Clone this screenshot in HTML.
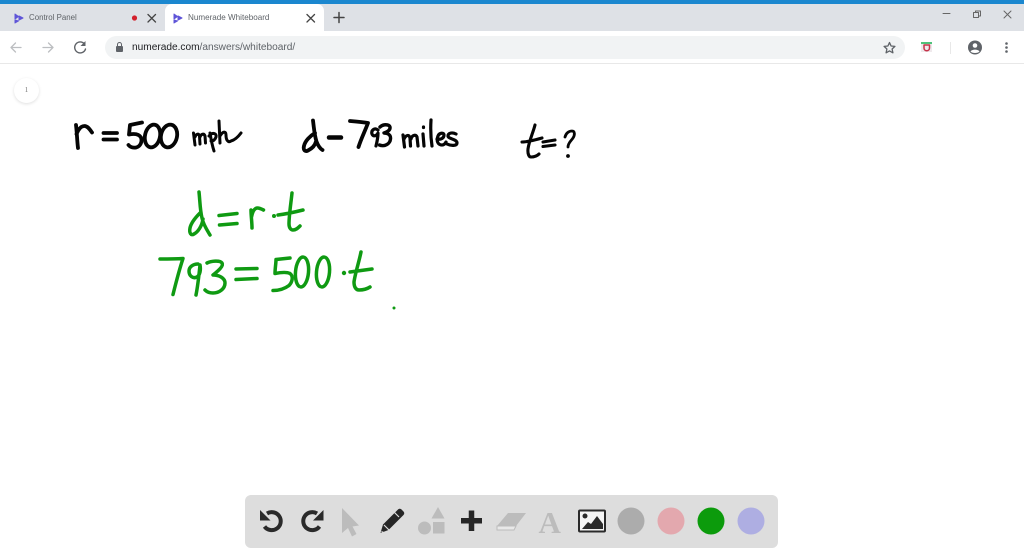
<!DOCTYPE html>
<html><head><meta charset="utf-8"><style>
html,body{margin:0;padding:0;width:1024px;height:554px;overflow:hidden;background:#fff;font-family:"Liberation Sans",sans-serif}
.a{position:absolute}
svg{position:absolute;left:0;top:0;filter:blur(.35px)}
.t{filter:blur(.25px)}
</style></head><body>
<div class="a" style="left:0;top:0;width:1024px;height:31px;background:#dee1e6"></div>
<div class="a" style="left:0;top:0;width:1024px;height:4px;background:#1b87cf"></div>
<div class="a" style="left:165px;top:4px;width:159px;height:28px;background:#fff;border-radius:7px 7px 0 0"></div>
<div class="a" style="left:0;top:63px;width:1024px;height:1px;background:#e8e8e8"></div>
<div class="a" style="left:105px;top:36px;width:800px;height:23px;background:#f1f3f4;border-radius:12px"></div>
<div class="a t" style="left:29px;top:12px;font-size:7.900px;color:#5f6368;line-height:12px">Control Panel</div>
<div class="a t" style="left:188px;top:12px;font-size:8.100px;color:#5f6368;line-height:12px">Numerade Whiteboard</div>
<div class="a t" style="left:132px;top:41px;font-size:10.150px;line-height:13px;color:#202124;white-space:nowrap">numerade.com<span style="color:#5f6368">/answers/whiteboard/</span></div>
<div class="a" style="left:14px;top:78px;width:25px;height:25px;border-radius:50%;background:#fff;box-shadow:0 1px 3px rgba(0,0,0,.13);text-align:center;font:7px/25px 'Liberation Serif',serif;color:#777">1</div>
<svg width="1024" height="554" viewBox="0 0 1024 554" fill="none" stroke-linecap="round" stroke-linejoin="round">
<!-- tab favicons -->
<g fill="#5f55d8" stroke="#5f55d8" stroke-width="1"><path d="M15 14l3.500 2.500-3.500 2.500z"/><path d="M19 16l4 2-4 2z"/><path d="M15 20l3.500 1-3.500 2z"/>
<path d="M174 14l3.500 2.500-3.500 2.500z"/><path d="M178 16l4 2-4 2z"/><path d="M174 20l3.500 1-3.500 2z"/></g>
<circle cx="134.500" cy="18" r="2.600" fill="#d3202c"/>
<g stroke="#444" stroke-width="1.300"><path d="M148 14.500l7.500 7.500M155.500 14.500l-7.500 7.500M307 14.500l7.500 7.500M314.500 14.500l-7.500 7.500"/><path d="M334 17.500h10M339 12.500v10" stroke-width="1.500"/></g>
<!-- nav -->
<g stroke="#bcbec1" stroke-width="1.300"><path d="M21 47.500H11M15.500 43l-4.500 4.500 4.500 4.500M43 47.500h10M48.500 43l4.500 4.500-4.500 4.500"/></g>
<path d="M84.500 44a5.500 5.500 0 1 0 1 5" stroke="#5f6368" stroke-width="1.400"/><path d="M85.500 41v5h-5z" fill="#5f6368"/>
<rect x="116" y="46" width="7" height="6" rx="1" fill="#5f6368"/><path d="M117.500 46v-1.500a2 2 0 0 1 4 0V46" stroke="#5f6368" stroke-width="1"/>
<!-- star, ext, profile, menu -->
<path d="M889.500 42.500l1.600 3.500 3.800.4-2.800 2.600.8 3.800-3.400-1.900-3.400 1.900.8-3.800-2.800-2.600 3.800-.4z" stroke="#5f6368" stroke-width="1.300"/>
<rect x="921" y="42" width="11" height="10" fill="#efe9ec"/><rect x="921" y="42" width="11" height="2" fill="#4fc27a"/>
<path d="M924 45h5.500v3a2.750 2.750 0 0 1-5.500 0z" stroke="#c5334a" stroke-width="1.500"/>
<rect x="950" y="42" width="1" height="12" fill="#e8e8e8"/>
<circle cx="975" cy="47.500" r="7" fill="#5f6368"/><circle cx="975" cy="45.500" r="2.300" fill="#fff"/><path d="M970.500 51.500c1.500-2.500 7.500-2.500 9 0-1.500 2-7.500 2-9 0z" fill="#fff"/>
<g fill="#5f6368"><circle cx="1006.500" cy="43.500" r="1.300"/><circle cx="1006.500" cy="47.500" r="1.300"/><circle cx="1006.500" cy="51.500" r="1.300"/></g>
<!-- window controls -->
<g stroke="#666" stroke-width="1"><path d="M943 13.500h7"/><path d="M973.500 12.500h5v5h-5zM975.500 12.500v-1.500h5v5h-2"/><path d="M1004 11l7 7M1011 11l-7 7"/></g>

<!-- black handwriting -->
<g stroke="#050505" stroke-width="3.800">
<path d="M76 125c1 8 1 15 2 23M76.500 134c2-5 5-8 8-8 3 0 5 3 7.500 6.500"/>
<path d="M103.500 133h13.500M103.500 139.500h13.500"/>
<path d="M142 122.500l-12 2.500-1 9.500c5-1 10-.5 12 3 1.500 4-.5 9-5 10-3 .5-6-.5-7.500-2.500"/>
<ellipse cx="152.500" cy="136" rx="7.500" ry="11.500" transform="rotate(12 152.500 136)"/>
<ellipse cx="169" cy="136" rx="8" ry="11.500" transform="rotate(12 169 136)"/>
<g stroke-width="3"><path d="M193.500 133l1.500 12M195 137c1-3 4-4 4.500-1l.5 8M200 137c1-3 4-4 5-1l.5 7"/><path d="M210 133c1 6 2 12 4 18M209 136c3-4 8-3 7 1-1 3-3 4-5 4"/><path d="M219 121l1 22M220 136c3-5 6-5 6-1 0 5 2 8 5 6 4-1 7-4 10-8"/></g>
<path d="M313 120.500c1 8 1.500 15 3.500 21 1.500 4 3.500 7 6 8.500M315 133c-5 3-10 8-11 13-1 4 1 6 4 4.500 4-2 7-5 8-9"/>
<path d="M329 137.500h12" stroke-width="4.500"/>
<path d="M350 121c6 .5 12 1 18 2-3 8-7 16-9.500 24"/>
<path d="M378 130c-4-3-7 1-6 4 1 3 5 2 6-1 0 5-1 9-2 13" stroke-width="3.200"/>
<path d="M380 127c3-3 9-3 10 0 .5 3-3 5-6 6 4 0 7 2 6.500 6-.5 5-6 8-11 6" stroke-width="3.400"/>
<path d="M403 135l1.500 12M404 139c2-4 5-5 6-1l.5 8M411 139c1-4 5-5 6-2l1 9M423 134l1 12M423.500 127v.5M431 120c-.5 8-.5 16 1 26" stroke-width="3.200"/>
<path d="M437 139c4 1 7-1 7-4 0-3-5-2-6 1-2 5 0 9 4 9 2 0 3-1 4-3M456 134c-4-2-8-1-8 2 0 3 9 3 9 7 0 3-6 3-10 1" stroke-width="3.200"/>
<path d="M535 125c-2 8-6 16-7 24-.5 5 1 8 3 8 3 0 6-1 8-3M522 142c6 0 13-2 20-4" stroke-width="3.100"/>
<path d="M543 142l12-2M543 146.500l12-1.500" stroke-width="3.100"/>
<path d="M565 137c1-4 4-6 7-6 3 0 3 4 1 7-2 3-5 5-5 9" stroke-width="2.800"/>
<circle cx="568" cy="156" r="1.900" fill="#050505" stroke="none"/>
</g>

<!-- green handwriting -->
<g stroke="#0f9a12" stroke-width="3.500">
<path d="M199 192c1 9 1 18 3 26 1 6 5 12 8 17M200 213c-4 4-9 10-10 15-1 5 1 8 4 6 4-2 8-8 9-15"/>
<path d="M219 215.500l18-2M219.500 225l17.500-1.500"/>
<path d="M251 210c0 6 1 12 1 18M251.500 217c1-5 3-9 6-9 2 0 4 1 6 2"/>
<circle cx="274" cy="216" r="2" fill="#0f9a12" stroke="none"/>
<path d="M278 215c8-1 17-3 25-5M292 193c-1 10-3 22-3 31 0 4 2 6 4 6 3 0 5-2 7-4"/>
<path d="M160 259c7 0 15 0 23-.5-4 12-7 24-10 36"/>
<path d="M198 264c-5 0-9 3-9 7 0 5 4 8 8 6 3-2 4-7 3-12-1 10-2 20-4 30"/>
<path d="M207 263c4-2 13-3 15 0 2 3-4 8-9 12 6 0 12 3 12 8 0 6-6 10-12 10-3 0-6-1-8-3"/>
<path d="M236 269l21-.5M236 279.500l21-1"/>
<path d="M290 258l-14 1.500c0 4-1 9-1 14 5-1 11-2 15 0 4 3 2 9-1 12-4 3-10 5-16 5"/>
<ellipse cx="302" cy="272" rx="6.500" ry="15" transform="rotate(5 302 272)"/>
<ellipse cx="323" cy="272" rx="6.500" ry="15" transform="rotate(5 323 272)"/>
<circle cx="344" cy="273" r="2.200" fill="#0f9a12" stroke="none"/>
<path d="M350 272c7-1 15-2 22-3M361 252c-2 10-6 22-7 30 0 5 2 8 5 8 4 0 8-1 11-3"/>
<circle cx="394" cy="308" r="1.500" fill="#0f9a12" stroke="none"/>
</g>
</svg>

<!-- bottom toolbar -->
<div class="a" style="left:245px;top:495px;width:533px;height:53px;background:#dddddd;border-radius:6px"></div>
<svg width="1024" height="554" viewBox="0 0 1024 554" fill="none">
<!-- undo -->
<path d="M267 513.500A9 9 0 1 1 264.500 526.500" stroke="#2a2a2a" stroke-width="4"/>
<path d="M260 510v10.500h10.500z" fill="#2a2a2a"/>
<!-- redo -->
<path d="M317 513.500A9 9 0 1 0 319.500 526.500" stroke="#2a2a2a" stroke-width="4"/>
<path d="M323.500 510v10.500h-10.500z" fill="#2a2a2a"/>
<!-- pointer -->
<path d="M342 508l17 17.500-6.500 1 4 7.500-4.500 2.500-4-8.500-6 5z" fill="#bcbcbc"/>
<!-- pencil -->
<path d="M380.500 533l2.500-8.500 15-15c1-1 2.500-1 3.500 0l2 2c1 1 1 2.500 0 3.500l-15 15z" fill="#262626"/>
<path d="M384 525l5 5M394.500 512.500l4.500 4.500M381.500 531.500l2 1" stroke="#ddd" stroke-width="1.200"/>
<!-- shapes -->
<path d="M438 507l6.500 11.500h-13z" fill="#bcbcbc"/><circle cx="424.500" cy="528" r="6.500" fill="#bcbcbc"/><rect x="433" y="522" width="11.500" height="11.500" fill="#bcbcbc"/>
<!-- plus -->
<path d="M471.500 510.500v20.500M461 520.700h21" stroke="#262626" stroke-width="5.500"/>
<!-- eraser -->
<path d="M508 513h18l-10 13h-19z" fill="#bcbcbc"/><path d="M497 526h19l-2 4h-17z" fill="#e8e8e8" stroke="#bcbcbc"/>
<!-- A -->
<text x="538.500" y="533" font-family="Liberation Serif,serif" font-weight="700" font-size="31" fill="#bcbcbc">A</text>
<!-- image -->
<rect x="579" y="510.500" width="26" height="21" rx="1" fill="#f4f4f4" stroke="#2a2a2a" stroke-width="2"/>
<circle cx="585" cy="516" r="2.500" fill="#2a2a2a"/>
<path d="M582 529l6-7 3 2 6-8 6 8v5z" fill="#2a2a2a"/>
<circle cx="631" cy="521" r="13.500" fill="#acacac"/>
<circle cx="671" cy="521" r="13.500" fill="#e3a8ae"/>
<circle cx="711" cy="521" r="13.500" fill="#0c9b0c"/>
<circle cx="751" cy="521" r="13.500" fill="#aeaee2"/>
</svg>
</body></html>
